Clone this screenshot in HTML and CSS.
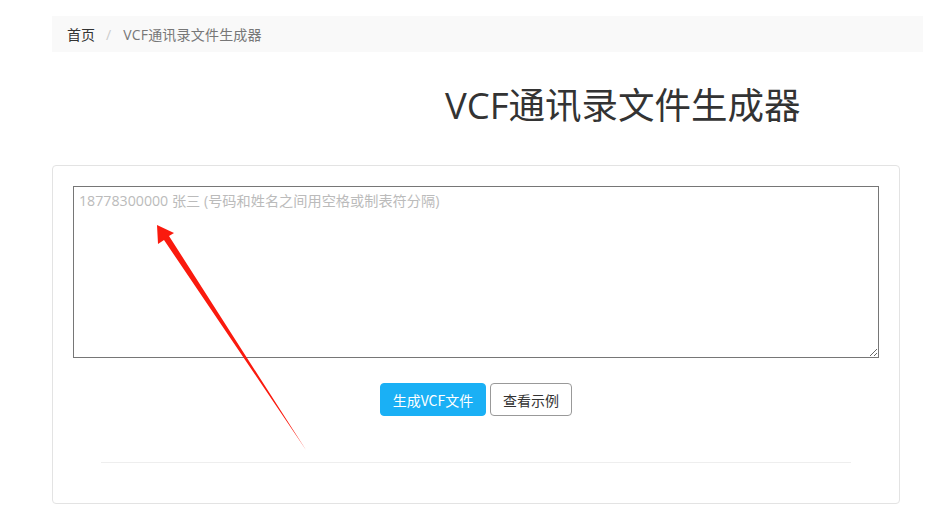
FILE: index.html
```html
<!DOCTYPE html>
<html lang="zh">
<head>
<meta charset="utf-8">
<title>VCF通讯录文件生成器</title>
<link rel="stylesheet" href="styles.css">
</head>
<body>
<div class="page">
  <nav class="crumbs">
    <a class="crumb-home" href="#">首页</a>
    <span class="crumb-sep">/</span>
    <span class="crumb-active">VCF通讯录文件生成器</span>
  </nav>
  <h1 class="title">VCF通讯录文件生成器</h1>
  <section class="card">
    <textarea class="input" placeholder="18778300000 张三 (号码和姓名之间用空格或制表符分隔)"></textarea>
    <div class="actions">
      <button class="btn btn-primary">生成VCF文件</button>
      <button class="btn btn-default">查看示例</button>
    </div>
    <hr class="divider">
  </section>
</div>
<svg class="annot" width="925" height="514" viewBox="0 0 925 514">
  <polygon points="157,225 174,233 169,236 306,450 164,240 158,244" fill="#fa1a0e"/>
</svg>
</body>
</html>
```
FILE: styles.css
```css
html, body {
  margin: 0;
  padding: 0;
  background: #fff;
}
body {
  font-family: "Noto Sans CJK SC", "Open Sans", sans-serif;
  color: #333;
  width: 925px;
  height: 514px;
  overflow: hidden;
  position: relative;
}
.page {
  padding: 16px 0 0 52px;
  width: 871px;
}
.crumbs {
  height: 36px;
  background: #f9f9f9;
  display: flex;
  align-items: center;
  padding-left: 15px;
  font-size: 14px;
  font-family: "Open Sans", "Noto Sans CJK SC", sans-serif;
}
.crumb-home {
  color: #333;
  text-decoration: none;
}
.crumb-sep {
  color: #ccc;
  padding: 0 12px 0 11px;
}
.crumb-active {
  color: #777;
  letter-spacing: 0.2px;
}
.title {
  margin: 29px 0 0 393px;
  font-size: 36.5px;
  font-weight: 400;
  line-height: 48px;
  color: #333;
  font-family: "Open Sans", "Noto Sans CJK SC", sans-serif;
}
.card {
  margin-top: 36px;
  width: 806px;
  height: 297px;
  border: 1px solid #e3e3e3;
  border-radius: 4px;
  padding: 20px;
  display: flex;
  flex-direction: column;
}
.input {
  box-sizing: border-box;
  width: 806px;
  height: 172px;
  border: 1px solid #767676;
  padding: 3px 5px;
  font-size: 14.2px;
  font-family: "Open Sans", "Noto Sans CJK SC", sans-serif;
  resize: vertical;
  margin: 0;
  outline: none;
  background: #fff;
}
.input::placeholder {
  color: #bbb;
}
.actions {
  display: flex;
  justify-content: center;
  gap: 4px;
  margin-top: 25px;
}
.btn {
  height: 33px;
  font-size: 14px;
  font-family: "Noto Sans CJK SC", sans-serif;
  border-radius: 4px;
  padding: 0;
  cursor: pointer;
}
.btn-primary {
  background: #1ab0f5;
  color: #fff;
  border: 1px solid #1ab0f5;
  width: 106px;
}
.btn-default {
  background: #fff;
  color: #333;
  border: 1px solid #999;
  width: 82px;
}
.divider {
  margin: 46px 28px 0 28px;
  border: 0;
  border-top: 1px solid #eee;
  height: 0;
}
.annot {
  position: absolute;
  left: 0;
  top: 0;
  pointer-events: none;
}
```
